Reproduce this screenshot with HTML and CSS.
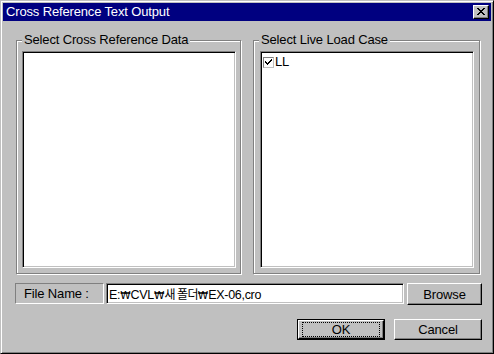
FILE: index.html
```html
<!DOCTYPE html>
<html>
<head>
<meta charset="utf-8">
<link rel="stylesheet" href="styles.css">
</head>
<body>
<div class="window">
  <div class="titlebar">
    <span class="title-text">Cross Reference Text Output</span>
    <div class="close-btn">
      <svg width="8" height="7" viewBox="0 0 8 7"><path d="M0 0h2v1h1v1h2v-1h1v-1h2v1h-1v1h-1v1h-1v1h1v1h1v1h1v1h-2v-1h-1v-1h-2v1h-1v1h-2v-1h1v-1h1v-1h1v-1h-1v-1h-1v-1h-1z" fill="#000"/></svg>
    </div>
  </div>
  <div class="content">
    <div class="groups">
      <div class="group group-left">
        <span class="group-label">Select Cross Reference Data</span>
        <div class="listbox"></div>
      </div>
      <div class="group group-right">
        <span class="group-label">Select Live Load Case</span>
        <div class="listbox">
          <div class="list-item">
            <span class="checkbox">
              <svg width="7" height="7" viewBox="0 0 7 7"><path d="M0 2h1v1h1v1h1v-1h1v-1h1v-1h1v-1h1v2h-1v1h-1v1h-1v1h-1v1h-1v-1h-1v-1h-1z" fill="#000"/></svg>
            </span>
            <span class="item-text">LL</span>
          </div>
        </div>
      </div>
    </div>
    <div class="file-row">
      <div class="file-label">File Name :</div>
      <div class="edit">E:<span class="won">₩</span>CVL<span class="won">₩</span><span class="kr">새 폴더</span><span class="won">₩</span>EX-06,cro</div>
      <div class="btn browse">Browse</div>
    </div>
    <div class="button-row">
      <div class="default-frame"><div class="btn ok"><span class="focus">OK</span></div></div>
      <div class="btn cancel">Cancel</div>
    </div>
  </div>
</div>
</body>
</html>
```

FILE: styles.css
```css
html, body {
  margin: 0;
  padding: 0;
  background: #c0c0c0;
}
body {
  font-family: "Liberation Sans", Arial, "Noto Sans CJK KR", sans-serif;
  font-size: 13px;
  letter-spacing: -0.15px;
  color: #000;
}
.window {
  width: 494px;
  height: 354px;
  box-sizing: border-box;
  border: 1px solid;
  border-color: #c0c0c0 #000 #000 #c0c0c0;
  box-shadow: inset 1px 1px 0 #fff, inset -1px -1px 0 #808080;
  padding: 2px;
  background: #c0c0c0;
  display: flex;
  flex-direction: column;
}
.titlebar {
  height: 18px;
  background: #000080;
  color: #fff;
  display: flex;
  align-items: center;
  justify-content: space-between;
  padding-left: 3px;
}
.title-text {
  font-size: 13px;
  line-height: 18px;
}
.close-btn {
  width: 16px;
  height: 14px;
  box-sizing: border-box;
  margin-right: 2px;
  background: #c0c0c0;
  border: 1px solid;
  border-color: #fff #000 #000 #fff;
  box-shadow: inset -1px -1px 0 #808080;
  display: flex;
  align-items: center;
  justify-content: center;
  padding-bottom: 1px;
}
.close-btn svg { display: block; }
.content {
  padding: 19px 0 0 12px;
  display: flex;
  flex-direction: column;
}
.groups {
  display: flex;
  gap: 12px;
  padding-left: 1px;
}
.group {
  position: relative;
  height: 234px;
  box-sizing: border-box;
  border: 1px solid #808080;
  box-shadow: inset 1px 1px 0 #fff, 1px 1px 0 #fff;
  padding-top: 10px;
}
.group-left { width: 225px; padding-left: 5px; }
.group-right { width: 227px; padding-left: 6px; }
.group-label {
  position: absolute;
  top: -9px;
  left: 5px;
  background: #c0c0c0;
  padding: 0 2px;
  line-height: 16px;
  white-space: nowrap;
}
.listbox {
  width: 214px;
  height: 217px;
  box-sizing: border-box;
  background: #fff;
  border: 1px solid;
  border-color: #808080 #fff #fff #808080;
  box-shadow: inset 1px 1px 0 #000, inset -1px -1px 0 #c0c0c0;
  padding: 2px 1px;
}
.list-item {
  display: flex;
  align-items: center;
  height: 14px;
  margin-top: 1px;
}
.checkbox {
  width: 11px;
  height: 11px;
  box-sizing: border-box;
  border: 1px solid;
  border-color: #808080 #c0c0c0 #c0c0c0 #808080;
  background: #fff;
  display: flex;
  align-items: center;
  justify-content: center;
  margin-left: 1px;
  margin-right: 1px;
}
.checkbox svg { display: block; }
.item-text { line-height: 14px; }
.file-row {
  display: flex;
  margin-top: 9px;
  height: 21px;
}
.file-label {
  width: 89px;
  height: 21px;
  box-sizing: border-box;
  border: 1px solid;
  border-color: #808080 #fff #fff #808080;
  padding-left: 8px;
  line-height: 19px;
}
.edit {
  width: 298px;
  height: 21px;
  margin-left: 2px;
  box-sizing: border-box;
  background: #fff;
  border: 1px solid;
  border-color: #808080 #fff #fff #808080;
  box-shadow: inset 1px 1px 0 #000, inset -1px -1px 0 #c0c0c0;
  padding-left: 2px;
  line-height: 19px;
  white-space: nowrap;
  font-size: 12.5px;
  letter-spacing: -0.3px;
}
.won {
  font-family: "DejaVu Sans", sans-serif;
  font-size: 10.5px;
  letter-spacing: 0;
}
.kr {
  font-family: "Noto Sans CJK KR", sans-serif;
  font-size: 12px;
  letter-spacing: -0.6px;
}
.btn {
  height: 21px;
  box-sizing: border-box;
  border: 1px solid;
  border-color: #fff #000 #000 #fff;
  box-shadow: inset -1px -1px 0 #808080;
  display: flex;
  align-items: center;
  justify-content: center;
  background: #c0c0c0;
}
.browse {
  width: 75px;
  margin-left: 3px;
  height: 22px;
}
.button-row {
  display: flex;
  justify-content: flex-end;
  margin-top: 15px;
  padding-right: 9px;
  gap: 9px;
}
.default-frame {
  width: 88px;
  height: 21px;
  box-sizing: border-box;
  border: 1px solid #000;
}
.ok {
  width: 86px;
  height: 19px;
  padding: 0 3px;
}
.focus {
  flex: 1;
  height: 13px;
  border: 1px dotted #000;
  display: flex;
  align-items: center;
  justify-content: center;
}
.cancel {
  width: 88px;
}
```
